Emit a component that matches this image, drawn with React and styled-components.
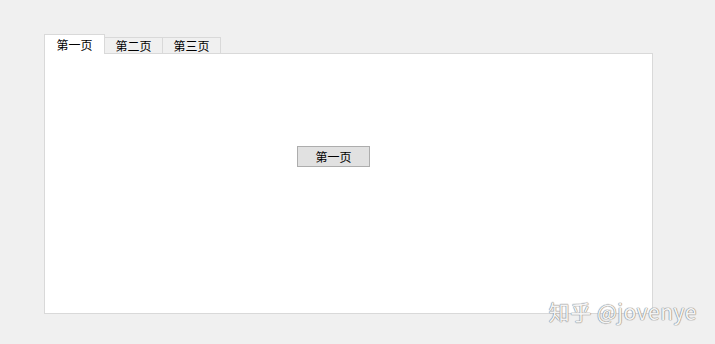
import React, { useState } from 'react';
import styled, { createGlobalStyle } from 'styled-components';

const GlobalStyle = createGlobalStyle`
    html, body {
        margin: 0;
        padding: 0;
        background: #f0f0f0;
        font-family: "Noto Sans CJK SC", "Liberation Sans", sans-serif;
    }
`;

const tabs = ['第一页', '第二页', '第三页'];

export default function App() {
    const [active, setActive] = useState(0);

    return (
        <Page>
            <GlobalStyle />
            <TabWidget>
                <TabBar>
                    {tabs.map((name, i) => (
                        <Tab key={name} active={i === active} onClick={() => setActive(i)}>
                            {name}
                        </Tab>
                    ))}
                </TabBar>
                <Panel>
                    <PushButton>{tabs[active]}</PushButton>
                </Panel>
            </TabWidget>
            <Watermark>知乎 @jovenye</Watermark>
        </Page>
    );
}

const Page = styled.div`
    position: relative;
    width: 715px;
    height: 344px;
    box-sizing: border-box;
    padding: 34px 0 0 44px;
    overflow: hidden;
`;

const TabWidget = styled.div`
    display: flex;
    flex-direction: column;
    width: 609px;
`;

const TabBar = styled.div`
    display: flex;
    align-items: flex-end;
    height: 20px;
    position: relative;
    z-index: 1;
`;

const Tab = styled.div`
    box-sizing: border-box;
    display: flex;
    align-items: center;
    justify-content: center;
    width: ${({ active }) => (active ? '61px' : '59px')};
    height: ${({ active }) => (active ? '20px' : '17px')};
    margin-left: ${({ active }) => (active ? '0' : '-1px')};
    border: 1px solid #d9d9d9;
    border-bottom: ${({ active }) => (active ? 'none' : '1px solid #d9d9d9')};
    background: ${({ active }) => (active ? '#ffffff' : '#f0f0f0')};
    font-size: 12px;
    line-height: 1;
    color: #000;
    cursor: default;
    padding-top: ${({ active }) => (active ? '1px' : '0')};

    &:first-child {
        margin-left: 0;
    }
`;

const Panel = styled.div`
    box-sizing: border-box;
    height: 261px;
    margin-top: -1px;
    border: 1px solid #d9d9d9;
    background: #ffffff;
    padding: 92px 0 0 252px;
`;

const PushButton = styled.button`
    display: block;
    box-sizing: border-box;
    width: 73px;
    height: 21px;
    padding: 0;
    border: 1px solid #adadad;
    background: #e1e1e1;
    font-family: "Noto Sans CJK SC", "Liberation Sans", sans-serif;
    font-size: 12px;
    line-height: 1;
    color: #000;
`;

const Watermark = styled.div`
    position: absolute;
    right: 18px;
    bottom: 22px;
    font-family: "Noto Sans CJK SC", "Liberation Sans", sans-serif;
    font-size: 21px;
    line-height: 1;
    color: rgba(255, 255, 255, 0.92);
    text-shadow: 0 0 1px #8a8a8a, 0 0 1px #8a8a8a, 0 0 1px #8a8a8a;
    letter-spacing: 0.5px;
`;
